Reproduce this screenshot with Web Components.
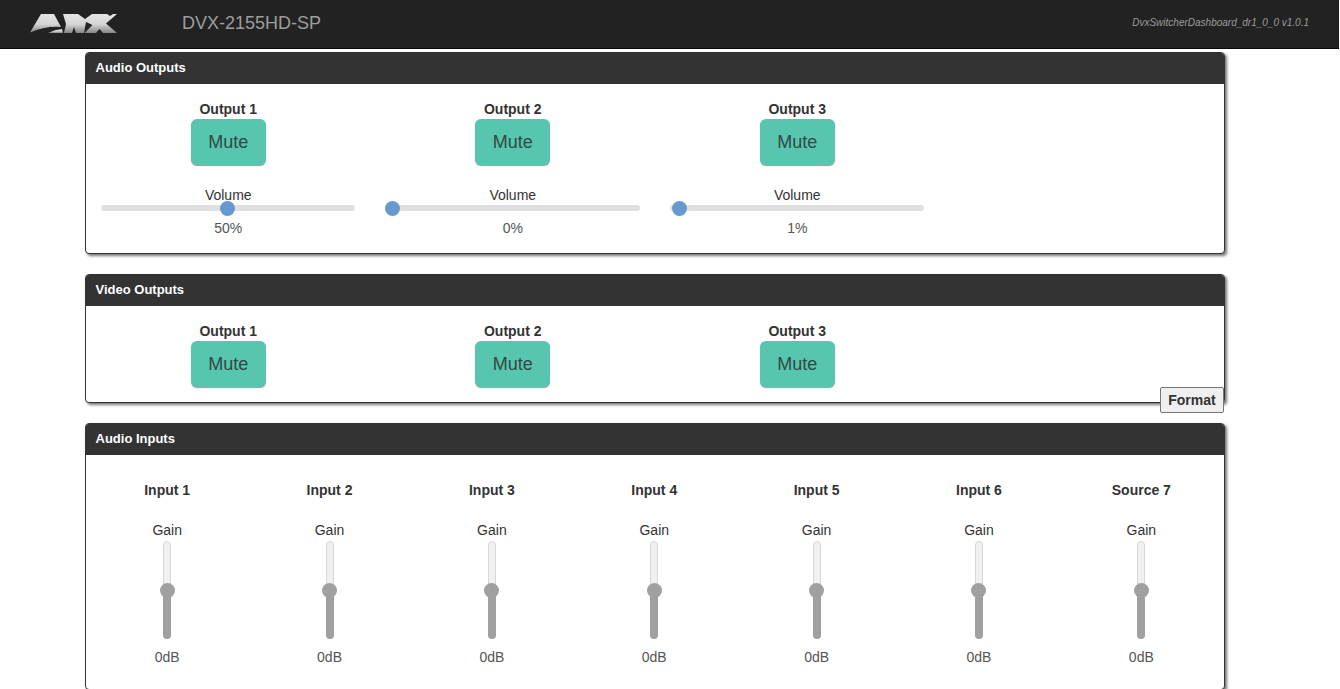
<!DOCTYPE html>
<html>
<head>
<meta charset="utf-8">
<title>DVX-2155HD-SP</title>
<style>
    html,body{
        margin: 0;
        height: 100%;
        overflow: hidden;
        background: #fff;
        color: #333;
        font-family: "Liberation Sans", Arial, sans-serif;
        font-size: 14px;
    }
    #page{
        width: 1339px;
    }
    #content{
        width: 1140px;
        margin-left: 85px;
        padding-top: 3px;
    }
</style>
</head>
<body>
<div id="page">
    <amx-header title-text="DVX-2155HD-SP" version="DvxSwitcherDashboard_dr1_0_0 v1.0.1"></amx-header>
    <div id="content">
        <amx-panel heading="Audio Outputs">
            <amx-output-row>
                <amx-output name="Output 1" volume="50"></amx-output>
                <amx-output name="Output 2" volume="0"></amx-output>
                <amx-output name="Output 3" volume="1"></amx-output>
            </amx-output-row>
        </amx-panel>
        <amx-panel heading="Video Outputs">
            <amx-output-row>
                <amx-output name="Output 1"></amx-output>
                <amx-output name="Output 2"></amx-output>
                <amx-output name="Output 3"></amx-output>
            </amx-output-row>
            <amx-format-button slot="overlay">Format</amx-format-button>
        </amx-panel>
        <amx-panel heading="Audio Inputs">
            <amx-input-row>
                <amx-input name="Input 1"></amx-input>
                <amx-input name="Input 2"></amx-input>
                <amx-input name="Input 3"></amx-input>
                <amx-input name="Input 4"></amx-input>
                <amx-input name="Input 5"></amx-input>
                <amx-input name="Input 6"></amx-input>
                <amx-input name="Source 7"></amx-input>
            </amx-input-row>
        </amx-panel>
    </div>
</div>
<script>
class AmxHeader extends HTMLElement {
    constructor (){
        super();
        this.root=this.attachShadow({mode: 'open'});
    }
    connectedCallback(){
        this.root.innerHTML = `
            <style>
                :host{
                    display: flex;
                    align-items: center;
                    height: 48px;
                    background: #222;
                    border-bottom: 1px solid #080808;
                    padding: 0 30px;
                }
                svg{
                    display: block;
                    flex: none;
                    margin-bottom: 3px;
                }
                h1{
                    margin: 0 0 2px 65px;
                    font-size: 18px;
                    font-weight: normal;
                    color: #9d9d9d;
                }
                small{
                    margin: 0 0 4px auto;
                    font-size: 10px;
                    font-style: italic;
                    color: #9d9d9d;
                }
            </style>
            <svg width="87" height="20" viewBox="30 13 87 20" aria-label="AMX">
                <defs>
                    <linearGradient id="g" x1="0" y1="0" x2="0" y2="1">
                        <stop offset="0" stop-color="#e4e4e4"/>
                        <stop offset="0.55" stop-color="#d4d4d4"/>
                        <stop offset="1" stop-color="#858585"/>
                    </linearGradient>
                </defs>
                <g fill="url(#g)">
                    <path d="M30 32.5 L41 14 H54 L61 27 Q45 26 30 32.5 Z"/>
                    <path d="M48 33 Q55 29.5 62 29 L63 33 Z"/>
                    <path d="M63 14 H78 L85 19 L92 14 H107 L110 16 L113 14 H117 L106 23.5 L117 33 H103 L99.5 29 L96 33 H84.5 L92.5 25 L86 22 L84 33 H76 L74 27 L72 33 H64 L66 24 Z"/>
                </g>
            </svg>
            <h1>${this.getAttribute('title-text')}</h1>
            <small>${this.getAttribute('version')}</small>
        `;
    }
}

class AmxPanel extends HTMLElement {
    constructor (){
        super();
        this.root=this.attachShadow({mode: 'open'});
    }
    connectedCallback(){
        this.root.innerHTML = `
            <style>
                :host{
                    display: block;
                    position: relative;
                    background: #fff;
                    border: 1px solid #333;
                    border-radius: 4px;
                    box-shadow: 2px 2px 3px #777;
                    margin-bottom: 20px;
                }
                header{
                    height: 31px;
                    line-height: 30px;
                    padding-left: 9.5px;
                    background: #333;
                    color: #fff;
                    font-size: 13px;
                    font-weight: bold;
                    border-radius: 3px 3px 0 0;
                }
            </style>
            <header>${this.getAttribute('heading')}</header>
            <slot></slot>
            <slot name="overlay"></slot>
        `;
    }
}

class AmxOutputRow extends HTMLElement {
    constructor (){
        super();
        this.attachShadow({mode: 'open'}).innerHTML = `
            <style>
                :host{
                    display: grid;
                    grid-template-columns: repeat(4, 1fr);
                    padding-top: 17px;
                }
            </style>
            <slot></slot>
        `;
    }
}

class AmxOutput extends HTMLElement {
    constructor (){
        super();
        this.root=this.attachShadow({mode: 'open'});
    }
    connectedCallback(){
        let volume = this.getAttribute('volume');
        let slider = volume === null ? '' : `
            <span class="label">Volume</span>
            <div class="track"><i style="left: calc((100% - 15px) * ${volume} / 100)"></i></div>
            <span class="value">${volume}%</span>
        `;
        this.root.innerHTML = `
            <style>
                :host{
                    display: flex;
                    flex-direction: column;
                    align-items: center;
                    padding: 0 15px 15px;
                    color: #333;
                }
                b{
                    font-size: 14px;
                    line-height: 16px;
                    margin-bottom: 2px;
                }
                button{
                    width: 75px;
                    height: 46px;
                    padding: 0;
                    border: 0;
                    border-radius: 6px;
                    background: #58c6ae;
                    box-shadow: 0 1px 1px #999;
                    color: #2f4a48;
                    font: 18px "Liberation Sans", Arial, sans-serif;
                }
                .label{
                    margin-top: 22px;
                    line-height: 16px;
                }
                .track{
                    position: relative;
                    align-self: stretch;
                    height: 6px;
                    margin: 2px 0.3px 0 0;
                    border-radius: 3px;
                    background: #e0e0e0;
                }
                i{
                    position: absolute;
                    top: -4.5px;
                    margin-left: -0.3px;
                    width: 15px;
                    height: 15px;
                    border-radius: 50%;
                    background: #6699cf;
                }
                .value{
                    margin-top: 9px;
                    line-height: 16px;
                    color: #555;
                    margin-bottom: 2px;
                }
            </style>
            <b>${this.getAttribute('name')}</b>
            <button>Mute</button>
            ${slider}
        `;
    }
}

class AmxFormatButton extends HTMLElement {
    constructor (){
        super();
        this.attachShadow({mode: 'open'}).innerHTML = `
            <style>
                :host{
                    position: absolute;
                    right: 0;
                    bottom: -11px;
                    width: 62px;
                    height: 24px;
                    line-height: 24px;
                    text-align: center;
                    background: #efefef;
                    border: 1px solid #767676;
                    border-radius: 2px;
                    font-size: 14px;
                    font-weight: bold;
                    color: #333;
                }
            </style>
            <slot></slot>
        `;
    }
}

class AmxInputRow extends HTMLElement {
    constructor (){
        super();
        this.attachShadow({mode: 'open'}).innerHTML = `
            <style>
                :host{
                    display: grid;
                    grid-template-columns: repeat(7, 1fr);
                    padding-top: 27px;
                    margin-right: 1.5px;
                }
            </style>
            <slot></slot>
        `;
    }
}

class AmxInput extends HTMLElement {
    constructor (){
        super();
        this.root=this.attachShadow({mode: 'open'});
    }
    connectedCallback(){
        this.root.innerHTML = `
            <style>
                :host{
                    display: flex;
                    flex-direction: column;
                    align-items: center;
                    padding-bottom: 24px;
                    color: #333;
                }
                b{
                    line-height: 16px;
                    margin-bottom: 24px;
                }
                .label{
                    line-height: 16px;
                    margin-bottom: 3px;
                }
                .track{
                    position: relative;
                    box-sizing: border-box;
                    width: 8px;
                    height: 98px;
                    border: 1px solid #d8d8d8;
                    border-radius: 4px;
                    background: #f0f0f0;
                    overflow: visible;
                }
                .fill{
                    position: absolute;
                    left: -1px;
                    right: -1px;
                    bottom: -1px;
                    height: 49px;
                    border-radius: 0 0 4px 4px;
                    background: #a0a0a0;
                }
                i{
                    position: absolute;
                    left: -4.5px;
                    top: 40.5px;
                    width: 15px;
                    height: 15px;
                    border-radius: 50%;
                    background: #a0a0a0;
                }
                .value{
                    margin-top: 10px;
                    line-height: 16px;
                    color: #555;
                }
            </style>
            <b>${this.getAttribute('name')}</b>
            <span class="label">Gain</span>
            <div class="track"><div class="fill"></div><i></i></div>
            <span class="value">0dB</span>
        `;
    }
}

customElements.define('amx-header',AmxHeader);
customElements.define('amx-panel',AmxPanel);
customElements.define('amx-output-row',AmxOutputRow);
customElements.define('amx-output',AmxOutput);
customElements.define('amx-format-button',AmxFormatButton);
customElements.define('amx-input-row',AmxInputRow);
customElements.define('amx-input',AmxInput);
</script>
</body>
</html>
